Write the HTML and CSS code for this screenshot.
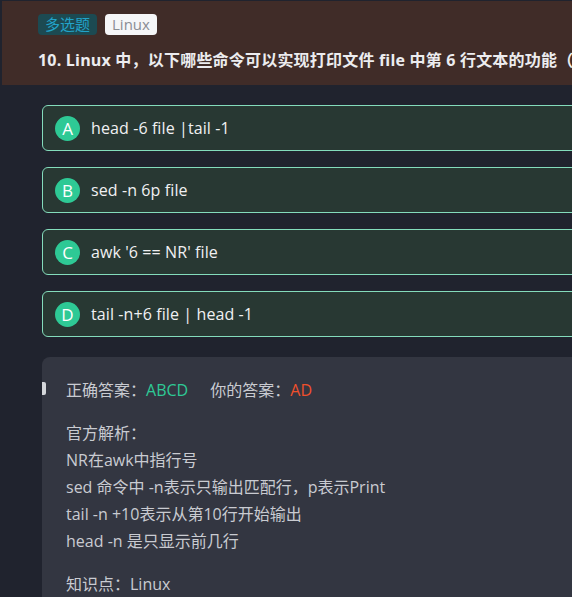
FILE: index.html
```html
<!DOCTYPE html>
<html lang="zh-CN">
<head>
    <meta charset="UTF-8">
    <meta name="viewport" content="width=device-width, initial-scale=1.0">
    <title>多选题</title>
    <link rel="stylesheet" href="styles.css">
</head>
<body>
    <div class="question-head">
        <div class="tags">
            <span class="tag tag-type">多选题</span>
            <span class="tag tag-topic">Linux</span>
        </div>
        <div class="question-title">10. Linux 中，以下哪些命令可以实现打印文件 file 中第 6 行文本的功能（ ）</div>
    </div>

    <div class="options">
        <div class="option selected">
            <span class="option-letter">A</span>
            <span class="option-text">head -6 file |tail -1</span>
        </div>
        <div class="option selected">
            <span class="option-letter">B</span>
            <span class="option-text">sed -n 6p file</span>
        </div>
        <div class="option selected">
            <span class="option-letter">C</span>
            <span class="option-text">awk '6 == NR' file</span>
        </div>
        <div class="option selected">
            <span class="option-letter">D</span>
            <span class="option-text">tail -n+6 file | head -1</span>
        </div>
    </div>

    <div class="answer-panel">
        <span class="panel-mark"></span>
        <div class="answer-row">
            正确答案：<span class="right">ABCD</span>
            <span class="yours">你的答案：<span class="wrong">AD</span></span>
        </div>
        <div class="analysis">
            <div>官方解析：</div>
            <div>NR在awk中指行号</div>
            <div>sed 命令中 -n表示只输出匹配行，p表示Print</div>
            <div>tail -n +10表示从第10行开始输出</div>
            <div>head -n 是只显示前几行</div>
        </div>
        <div class="knowledge">知识点：Linux</div>
    </div>
</body>
</html>
```

FILE: styles.css
```css
body {
    margin: 0;
    width: 760px;
    background-color: #20232e;
    font-family: "Open Sans", "Noto Sans CJK SC", sans-serif;
    color: #e6e7ea;
    overflow: hidden;
}
.question-head {
    margin: 1px 0 0 2px;
    padding: 13px 0 0 36px;
    height: 71px;
    background-color: #402c28;
}
.tags {
    display: flex;
    gap: 8px;
}
.tag {
    height: 21px;
    line-height: 21px;
    padding: 0 7px;
    border-radius: 4px;
    font-size: 15px;
}
.tag-type {
    background-color: #1c4a52;
    color: #22a3c9;
}
.tag-topic {
    background-color: #f5f6f8;
    color: #8a8d94;
}
.question-title {
    margin-top: 12px;
    font-size: 16px;
    font-weight: bold;
    letter-spacing: 0.2px;
    color: #ececef;
    white-space: nowrap;
}
.options {
    padding: 20px 0 0 42px;
    display: flex;
    flex-direction: column;
    gap: 16px;
}
.option {
    height: 44px;
    display: flex;
    align-items: center;
    gap: 11px;
    padding-left: 12px;
    border: 1px solid #3a4a44;
    border-radius: 6px;
    background-color: #262a30;
}
.option.selected {
    border-color: #84dcbc;
    background-color: #283833;
}
.option-letter {
    width: 25px;
    height: 25px;
    border-radius: 50%;
    background-color: #2ec995;
    color: #ffffff;
    font-size: 17px;
    display: flex;
    align-items: center;
    justify-content: center;
}
.option-text {
    font-size: 16px;
    letter-spacing: 0.1px;
    color: #f0f0f2;
}
.answer-panel {
    position: relative;
    margin: 20px 0 0 42px;
    padding: 20px 24px 20px 24px;
    background-color: #333641;
    border-radius: 8px;
    font-size: 16px;
    color: #c9cbd1;
    line-height: 27px;
}
.panel-mark {
    position: absolute;
    left: 0;
    top: 25px;
    width: 4px;
    height: 13px;
    background-color: #d4d6da;
    border-radius: 0 2px 2px 0;
}
.right {
    color: #2ec995;
}
.yours {
    margin-left: 18px;
}
.wrong {
    color: #f0502c;
}
.analysis {
    margin-top: 16px;
}
.knowledge {
    margin-top: 16px;
}
```
